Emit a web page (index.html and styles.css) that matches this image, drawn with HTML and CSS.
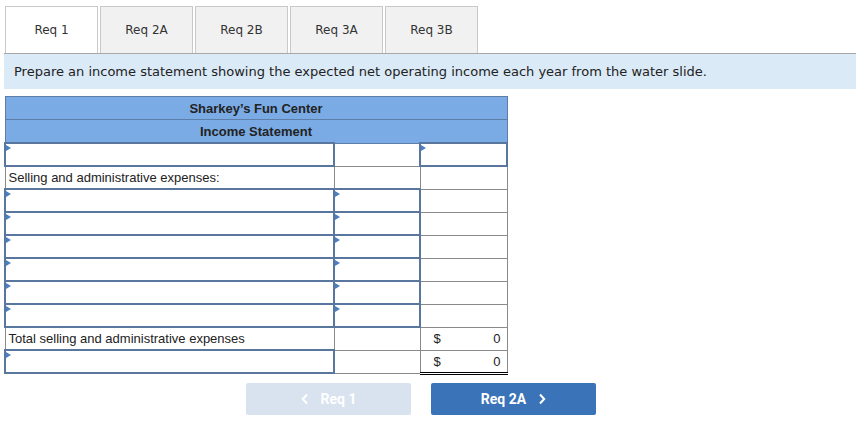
FILE: index.html
```html
<!DOCTYPE html>
<html lang="en">
<head>
    <meta charset="UTF-8">
    <title>Income Statement</title>
    <link rel="stylesheet" href="styles.css">
</head>
<body>
    <div class="tabs">
        <div class="tab active">Req 1</div>
        <div class="tab">Req 2A</div>
        <div class="tab">Req 2B</div>
        <div class="tab">Req 3A</div>
        <div class="tab">Req 3B</div>
    </div>
    <div class="instructions">Prepare an income statement showing the expected net operating income each year from the water slide.</div>

    <table class="statement">
        <tr class="head"><th colspan="3">Sharkey’s Fun Center</th></tr>
        <tr class="head"><th colspan="3">Income Statement</th></tr>
        <tr>
            <td class="entry"></td>
            <td></td>
            <td class="entry"></td>
        </tr>
        <tr>
            <td class="label">Selling and administrative expenses:</td>
            <td></td>
            <td></td>
        </tr>
        <tr><td class="entry"></td><td class="entry"></td><td></td></tr>
        <tr><td class="entry"></td><td class="entry"></td><td></td></tr>
        <tr><td class="entry"></td><td class="entry"></td><td></td></tr>
        <tr><td class="entry"></td><td class="entry"></td><td></td></tr>
        <tr><td class="entry"></td><td class="entry"></td><td></td></tr>
        <tr><td class="entry"></td><td class="entry"></td><td></td></tr>
        <tr>
            <td class="label">Total selling and administrative expenses</td>
            <td></td>
            <td class="amount"><span>$</span><span>0</span></td>
        </tr>
        <tr>
            <td class="entry"></td>
            <td></td>
            <td class="amount total"><span>$</span><span>0</span></td>
        </tr>
    </table>

    <div class="nav">
        <button class="nav-btn prev" disabled>
            <svg class="chev" width="8" height="12" viewBox="0 0 8 12"><polyline points="6,1.5 1.8,6 6,10.5" fill="none" stroke="currentColor" stroke-width="2"/></svg>
            Req 1
        </button>
        <button class="nav-btn next">
            Req 2A
            <svg class="chev" width="8" height="12" viewBox="0 0 8 12"><polyline points="2,1.5 6.2,6 2,10.5" fill="none" stroke="currentColor" stroke-width="2"/></svg>
        </button>
    </div>
</body>
</html>
```

FILE: styles.css
```css
body {
    margin: 0;
    padding: 6px 0 0 4px;
    background: #fff;
    font-family: "Liberation Sans", Arial, sans-serif;
    color: #222;
}
.tabs {
    display: flex;
    gap: 2px;
    padding-left: 1px;
    border-bottom: 1px solid #a8a8a8;
}
.tab {
    width: 91px;
    height: 46px;
    line-height: 46px;
    text-align: center;
    background: #f1f1f1;
    border: 1px solid #c9c9c9;
    border-bottom: none;
    font-family: "DejaVu Sans", Verdana, sans-serif;
    font-size: 12px;
    color: #333;
}
.tab.active {
    background: #fff;
}
.instructions {
    background: #dbeaf7;
    height: 35px;
    line-height: 36px;
    padding-left: 10px;
    font-family: "DejaVu Sans", Verdana, sans-serif;
    font-size: 13px;
    color: #222;
}
.statement {
    margin-top: 7px;
    border-collapse: collapse;
    border: 1px solid #8a8a8a;
    font-size: 13px;
}
.statement td {
    height: 21px;
    padding: 0;
    border: 1px solid #8a8a8a;
}
.statement td:nth-child(1) { width: 325px; }
.statement td:nth-child(2) { width: 84px; }
.statement td:nth-child(3) { width: 85px; }
.head th {
    height: 22px;
    padding: 0;
    background: #7aabe4;
    border: 1px solid #5c7ea8;
    font-size: 13px;
    font-weight: bold;
    color: #222;
}
.statement td.entry {
    position: relative;
    border: 2px solid #58769e;
}
.entry::before {
    content: "";
    position: absolute;
    left: 0;
    top: 1px;
    border-left: 5px solid #4b7fc0;
    border-top: 3px solid transparent;
    border-bottom: 3px solid transparent;
}
.statement td.label {
    padding-left: 3px;
}
.amount span:first-child {
    float: left;
    padding-left: 13px;
}
.amount span:last-child {
    float: right;
    padding-right: 6px;
}
.statement td.total {
    border-bottom: 3px double #000;
}
.nav {
    display: flex;
    gap: 20px;
    margin: 8px 0 0 242px;
}
.nav-btn {
    display: flex;
    align-items: center;
    justify-content: center;
    gap: 12px;
    width: 165px;
    height: 32px;
    border: none;
    border-radius: 2px;
    font-family: Roboto, "Liberation Sans", sans-serif;
    font-size: 14px;
    font-weight: bold;
    color: #fff;
    background: #3a73b7;
}
.nav-btn.prev {
    background: #d9e3f0;
}
```
